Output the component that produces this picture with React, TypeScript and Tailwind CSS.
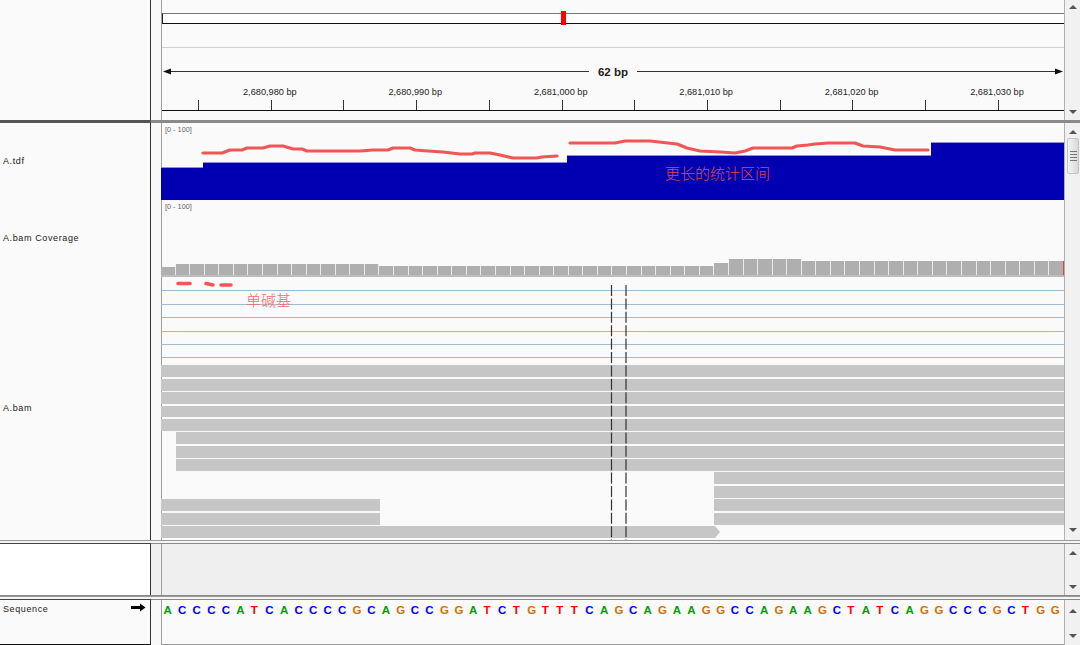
import React from "react";

const FONT = "[font-family:'Liberation_Sans',Arial,sans-serif]";

function Arrow({ up }: { up?: boolean }) {
  return (
    <svg width="8" height="5" viewBox="0 0 8 5" className="block">
      <path d={up ? "M0 5 L4 1 L8 5 Z" : "M0 0 L8 0 L4 4 Z"} fill="#555" />
    </svg>
  );
}

function Scroll({ thumb, upPad, downPad }: { thumb?: boolean; upPad: string; downPad: string }) {
  return (
    <div className="w-4 shrink-0 bg-[#f1f1f1] border-l border-[#b0b0b0] flex flex-col items-center justify-between">
      <div className={`${upPad} flex flex-col items-center w-full`}>
        <Arrow up />
        {thumb && (
          <div className="mt-[4px] ml-[1px] w-[12px] h-[36px] rounded-[2px] border border-[#c4c4c4] bg-gradient-to-r from-[#f4f4f4] to-[#d9d9d9] flex flex-col items-center justify-center gap-[2px]">
            <div className="w-[7px] h-px bg-[#777]" />
            <div className="w-[7px] h-px bg-[#777]" />
            <div className="w-[7px] h-px bg-[#777]" />
            <div className="w-[7px] h-px bg-[#777]" />
          </div>
        )}
      </div>
      <div className={downPad}>
        <Arrow />
      </div>
    </div>
  );
}

const tickCount = 12;
const labels = ["2,680,980 bp", "2,680,990 bp", "2,681,000 bp", "2,681,010 bp", "2,681,020 bp", "2,681,030 bp"];

function Header() {
  return (
    <div className="h-[120px] flex">
      <div className="w-[151px] shrink-0 bg-[#fafafa] border-r border-[#333]" />
      <div className="w-[10px] shrink-0 bg-[#f8f8f8]" />
      <div className="flex-1 min-w-0 bg-[#fafafa] border-l border-[#a0a0a0] flex flex-col">
        <div className="h-[47px] pt-[13px] shrink-0">
          <div className="relative h-[11px] bg-white border-t border-t-[#777] border-b border-b-[#111] border-l border-l-[#222]">
            <div className="absolute left-[398px] top-[-3px] w-[5px] h-[14px] bg-[#ff0000]" />
          </div>
        </div>
        <div className="flex-1 border-t border-[#cfcfd8] flex flex-col">
          <div className="h-[24px] flex items-end shrink-0">
            <svg width="8" height="7" viewBox="0 0 8 7" className="ml-[1px] mb-[-3px] shrink-0">
              <path d="M0 3.5 L8 0.5 L8 6.5 Z" fill="#111" />
            </svg>
            <div className="w-[418px] h-px bg-[#333] shrink-0" />
            <div className={`${FONT} w-[48px] shrink-0 text-center text-[11.5px] font-bold text-[#222] leading-none mb-[-6px]`}>62 bp</div>
            <div className="flex-1 h-px bg-[#333]" />
            <svg width="8" height="7" viewBox="0 0 8 7" className="mr-[1px] mb-[-3px] shrink-0">
              <path d="M8 3.5 L0 0.5 L0 6.5 Z" fill="#111" />
            </svg>
          </div>
          <div className={`${FONT} h-[16px] mt-[10px] flex items-end pl-[81px] shrink-0`}>
            {labels.map((l) => (
              <div key={l} className="w-[145.45px] shrink-0 text-[9.2px] text-[#222] leading-[11px] whitespace-nowrap">
                {l}
              </div>
            ))}
          </div>
          <div className="h-[12px] flex items-end pl-[36px] shrink-0">
            {Array.from({ length: tickCount }).map((_, i) => (
              <div key={i} className="w-[72.73px] shrink-0">
                <div className="w-px h-[10px] bg-[#333]" />
              </div>
            ))}
          </div>
          <div className="h-px bg-[#111] shrink-0" />
          <div className="flex-1" />
        </div>
      </div>
      <Scroll upPad="pt-[4px]" downPad="pb-[5px]" />
    </div>
  );
}

function ThickDivider() {
  return (
    <div className="h-[3px] flex">
      <div className="w-[151px] shrink-0 bg-[#555]" />
      <div className="flex-1 bg-[#8a8a8a]" />
    </div>
  );
}

function GapDivider() {
  return (
    <div className="h-[4px] flex flex-col bg-[#f4f4f4] border-t border-[#9a9a9a]">
      <div className="mt-auto flex h-px">
        <div className="w-[151px] shrink-0 bg-[#444]" />
        <div className="flex-1 bg-[#8a8a8a]" />
      </div>
    </div>
  );
}

function TdfTrack() {
  const bars = [
    { w: "w-[42px]", h: "h-[33px]" },
    { w: "w-[364px]", h: "h-[38px]" },
    { w: "w-[364px]", h: "h-[45px]" },
    { w: "flex-1", h: "h-[58px]" },
  ];
  return (
    <div className="h-[77px] -ml-px relative flex items-end">
      <div className={`${FONT} absolute left-[4px] top-[2px] text-[7.3px] text-[#666] leading-[9px]`}>[0 - 100]</div>
      {bars.map((b, i) => (
        <div key={i} className={`${b.w} ${b.h} bg-[#0000b2] border-t border-[#8f8fd8]`} />
      ))}
    </div>
  );
}

const covHeights: number[] = Array.from({ length: 62 }, (_, i) => {
  if (i === 0) return 8;
  if (i < 15) return 11;
  if (i < 38) return 9;
  if (i === 38) return 12;
  if (i < 44) return 16;
  return 14;
});

function CoverageTrack() {
  return (
    <div className="h-[77px] -ml-px relative flex flex-col justify-end">
      <div className={`${FONT} absolute left-[4px] top-[2px] text-[7.3px] text-[#666] leading-[9px]`}>[0 - 100]</div>
      <div className="flex items-end">
        {covHeights.map((h, i) => (
          <div
            key={i}
            className={`flex-1 min-w-0 border-r bg-[#afafaf] ${i === 61 ? "border-[#e8403c]" : "border-[#ececec]"}`}
            style={{ height: h }}
          />
        ))}
      </div>
      <div className="h-[2px] bg-[#bdbdbd]" />
    </div>
  );
}

type Seg = { start: number; end: number | null; arrow?: boolean };
const L = 0;
const rows: (Seg[] | "line")[] = [
  "line", "line", "line", "line", "line", "line",
  [{ start: L, end: null }], [{ start: L, end: null }], [{ start: L, end: null }], [{ start: L, end: null }], [{ start: L, end: null }],
  [{ start: 15, end: null }], [{ start: 15, end: null }], [{ start: 15, end: null }],
  [{ start: 553, end: null }], [{ start: 553, end: null }],
  [{ start: L, end: 219 }, { start: 553, end: null }],
  [{ start: L, end: 219 }, { start: 553, end: null }],
  [{ start: L, end: 559, arrow: true }],
];

function ReadsTrack() {
  return (
    <div className="h-[263px] -ml-px pt-[8px] flex flex-col overflow-hidden">
      {rows.map((r, i) => (
        <div key={i} className="h-[13.4px] shrink-0 flex pb-[1.5px]">
          {r === "line" ? (
            <div className="flex-1 flex items-center">
              <div className="w-full h-px bg-[#9dbdd5]" />
            </div>
          ) : (
            r.map((s, j) => {
              const prevEnd = j > 0 ? (r[j - 1].end ?? 0) : 0;
              return (
                <div
                  key={j}
                  className={`${s.end === null ? "flex-1" : "shrink-0"} bg-[#c6c6c6] ${s.arrow ? "[clip-path:polygon(0_0,calc(100%-5px)_0,100%_50%,calc(100%-5px)_100%,0_100%)]" : ""}`}
                  style={{ marginLeft: s.start - prevEnd, width: s.end === null ? undefined : s.end - s.start }}
                />
              );
            })
          )}
        </div>
      ))}
    </div>
  );
}

const line1 = "203,153 222,153 230,150 242,150 247,148 263,148 270,146 283,146 293,149 302,149 307,151 360,151 373,150 388,150 393,148 410,148 415,150 428,151 443,152 460,154 472,154 475,153 490,153 500,155 513,158 537,158 542,157 557,156";
const line2 = "570,143 615,143 625,141 650,141 677,144 687,148 700,151 720,152 735,153 745,151 753,148 792,148 797,146 808,145 815,144 828,143 855,143 863,146 880,147 895,150 928,150";

function Overlay() {
  return (
    <svg className="absolute left-0 top-0 pointer-events-none" width="1080" height="540" viewBox="0 0 1080 540">
      <g fill="none" stroke="#f25555" strokeLinecap="round" strokeLinejoin="round">
        <polyline points={line1} strokeWidth="3.2" />
        <polyline points={line2} strokeWidth="3.2" />
        <path d="M178 283.5 L190 283.5" strokeWidth="3.5" />
        <path d="M206 283.5 L213 285" strokeWidth="3.5" />
        <path d="M221 285 L231 285" strokeWidth="3.5" />
      </g>
      <g stroke="#333" strokeWidth="1.2" strokeDasharray="11 2.4">
        <path d="M611.5 285 L611.5 540" />
        <path d="M626 285 L626 540" />
      </g>
    </svg>
  );
}

function Tracks() {
  return (
    <div className="h-[417px] flex">
      <div className={`${FONT} w-[151px] shrink-0 bg-[#fafafa] border-r border-[#333] flex flex-col text-[9px] tracking-[0.62px] text-[#222] pl-[3px]`}>
        <div className="h-[77px] flex items-center">A.tdf</div>
        <div className="h-[77px] flex items-center">A.bam Coverage</div>
        <div className="h-[263px] flex items-center">A.bam</div>
      </div>
      <div className="w-[10px] shrink-0 bg-[#f8f8f8]" />
      <div className="flex-1 min-w-0 bg-[#fafafa] border-l border-[#a0a0a0] flex flex-col">
        <TdfTrack />
        <CoverageTrack />
        <ReadsTrack />
      </div>
      <Scroll thumb upPad="pt-[6px]" downPad="pb-[7px]" />
    </div>
  );
}

function Empty() {
  return (
    <div className="h-[52px] flex border-b border-[#8a8a8a]">
      <div className="w-[151px] shrink-0 bg-white border-r border-[#333]" />
      <div className="w-[10px] shrink-0 bg-[#f0f0f0]" />
      <div className="flex-1 min-w-0 bg-[#efefef] border-l border-[#a0a0a0]" />
      <Scroll upPad="pt-[6px]" downPad="pb-[5px]" />
    </div>
  );
}

const SEQ = "ACCCCATCACCCCGCAGCCGGATCTGTTTCAGCAGAAGGCCAGAAGCTATCAGGCCCGCTGG";
const baseClass: Record<string, string> = {
  A: "text-[#00a000]",
  C: "text-[#0000ff]",
  G: "text-[#d17105]",
  T: "text-[#ff0000]",
};

function Sequence() {
  return (
    <div className="flex-1 flex min-h-0">
      <div className={`${FONT} w-[151px] shrink-0 bg-[#fafafa] border-r border-[#333] border-b border-b-[#111] flex items-start justify-between pl-[3px] pr-[4px] pt-[3px] text-[9px] tracking-[0.62px] text-[#222]`}>
        <span className="leading-[12px]">Sequence</span>
        <svg width="15" height="9" viewBox="0 0 15 9">
          <path d="M0 3 H9 V0.5 L14.5 4.5 L9 8.5 V6 H0 Z" fill="#000" />
        </svg>
      </div>
      <div className="w-[10px] shrink-0 bg-[#f8f8f8]" />
      <div className="flex-1 min-w-0 bg-[#fafafa] border-l border-[#a0a0a0] border-b border-b-[#999]">
        <div className={`${FONT} flex pt-[4px] text-[11.5px] font-bold leading-[12px]`}>
          {SEQ.split("").map((b, i) => (
            <div key={i} className={`flex-1 min-w-0 pl-[1.5px] ${baseClass[b]}`}>
              {b}
            </div>
          ))}
        </div>
      </div>
      <Scroll upPad="pt-[8px]" downPad="pb-[6px]" />
    </div>
  );
}

export default function App() {
  return (
    <div className="relative w-[1080px] h-[645px] overflow-hidden bg-[#fafafa] flex flex-col">
      <Header />
      <ThickDivider />
      <Tracks />
      <GapDivider />
      <Empty />
      <GapDivider />
      <Sequence />
      <Overlay />
      <div className="absolute left-[665px] top-[163px] text-[15px] leading-[20px] text-[#e04848] [font-family:'Noto_Sans_CJK_SC',sans-serif] font-light whitespace-nowrap">更长的统计区间</div>
      <div className="absolute left-[246px] top-[290px] text-[15px] leading-[20px] text-[#f26a6a] [font-family:'Noto_Sans_CJK_SC',sans-serif] font-light whitespace-nowrap">单碱基</div>
    </div>
  );
}
